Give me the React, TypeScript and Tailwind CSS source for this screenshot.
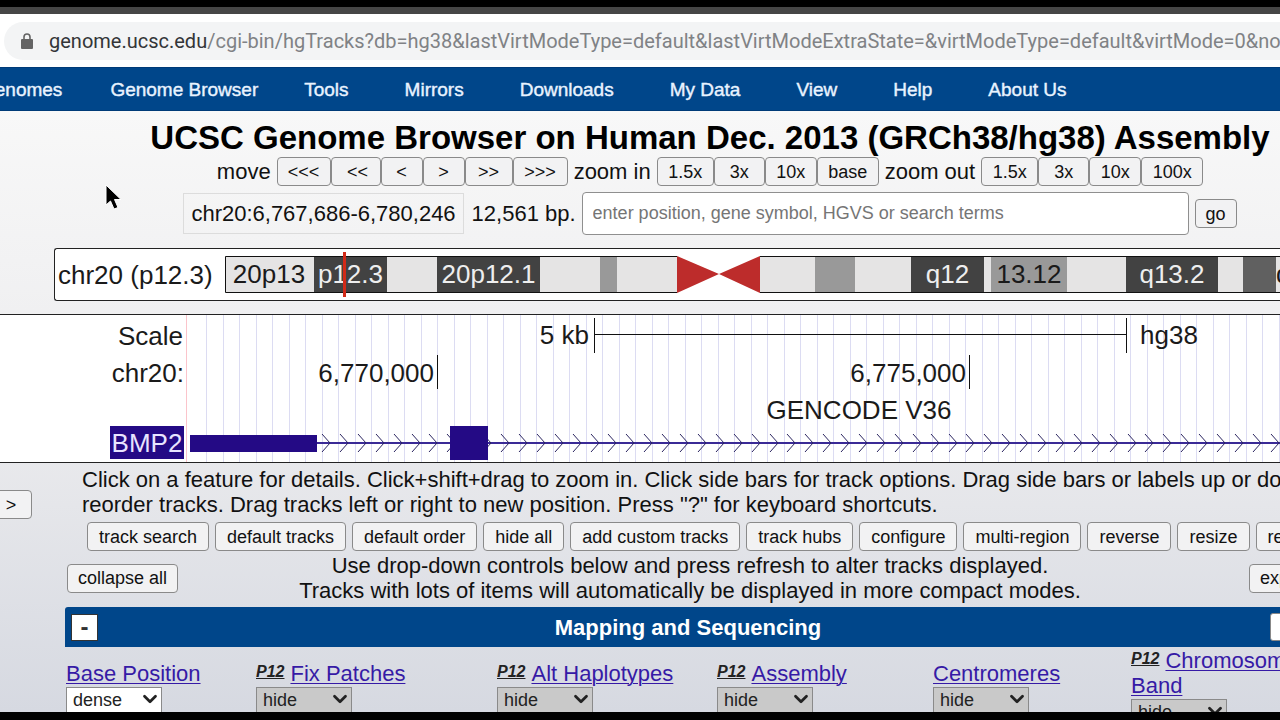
import type { ReactNode } from 'react';
import { ChevronDown } from 'lucide-react';
import clsx from 'clsx';

const menu = ['Tools', 'Mirrors', 'Downloads', 'My Data', 'View', 'Help', 'About Us'];

const moves = [
  { label: '<<<', width: 'w-[54px]' },
  { label: '<<', width: 'w-[50px] pl-1' },
  { label: '<', width: 'w-[42px]' },
  { label: '>', width: 'w-[42px]' },
  { label: '>>', width: 'w-[48px]' },
  { label: '>>>', width: 'w-[55px]' },
];

const zoomsIn = [
  { label: '1.5x', width: 'w-[57px]' },
  { label: '3x', width: 'w-[51px]' },
  { label: '10x', width: 'w-[52px]' },
  { label: 'base', width: 'w-[62px]' },
];

const zoomsOut = [
  { label: '1.5x', width: 'w-[57px]' },
  { label: '3x', width: 'w-[51px]' },
  { label: '10x', width: 'w-[52px]' },
  { label: '100x', width: 'w-[62px]' },
];

const actions = [
  'track search',
  'default tracks',
  'default order',
  'hide all',
  'add custom tracks',
  'track hubs',
  'configure',
  'multi-region',
  'reverse',
  'resize',
  'refresh',
];

const tracks = [
  { name: 'Base Position', patch: false, value: 'dense', width: 'w-[190px]' },
  { name: 'Fix Patches', patch: true, value: 'hide', width: 'w-[241px]' },
  { name: 'Alt Haplotypes', patch: true, value: 'hide', width: 'w-[220px]' },
  { name: 'Assembly', patch: true, value: 'hide', width: 'w-[216px]' },
  { name: 'Centromeres', patch: false, value: 'hide', width: 'w-[198px]' },
  { name: 'Chromosome Band', patch: true, value: 'hide', width: 'w-[180px]' },
];

const bands = [
  { x: 259, w: 73, fill: '#424242', label: 'p12.3', ink: '#eee' },
  { x: 382, w: 103, fill: '#424242', label: '20p12.1', ink: '#eee' },
  { x: 545, w: 17, fill: '#999' },
  { x: 760, w: 40, fill: '#999' },
  { x: 856, w: 73, fill: '#424242', label: 'q12', ink: '#eee' },
  { x: 936, w: 76, fill: '#999', label: '13.12', ink: '#1a1a1a' },
  { x: 1071, w: 92, fill: '#424242', label: 'q13.2', ink: '#eee' },
  { x: 1188, w: 33, fill: '#606060' },
];

const gridLines = Array.from({ length: 160 }, (_, i) => Math.round(206 + i * 16.5));
const arrows = Array.from({ length: 140 }, (_, i) => Math.round(330 + i * 17.9));

type ButtonProps = { children: ReactNode; className?: string };

const Button = ({ children, className }: ButtonProps) => (
  <button
    type="button"
    className={clsx(
      'h-[29px] shrink-0 rounded border border-[#8a8a8a] bg-[#f2f2f3] text-center text-lg leading-none whitespace-nowrap text-[#111]',
      className
    )}
  >
    {children}
  </button>
);

const AddressBar = () => (
  <div className="flex h-[53px] items-center bg-white pt-px">
    <div className="ml-1 flex h-[38px] flex-1 items-center gap-[16px] overflow-hidden rounded-l-full bg-[#f3f4f5] pl-[17px]">
      <svg width="12" height="16" viewBox="0 0 12 16" className="shrink-0">
        <path d="M3 7V4a3 3 0 0 1 6 0v3" fill="none" stroke="#646464" strokeWidth="1.6" />
        <rect x="0" y="6" width="12" height="10" rx="1" fill="#646464" />
      </svg>
      <p className="font-['Roboto',sans-serif] text-xl whitespace-nowrap text-[#808285]">
        <span className="text-[#333538]">genome.ucsc.edu</span>
        /cgi-bin/hgTracks?db=hg38&amp;lastVirtModeType=default&amp;lastVirtModeExtraState=&amp;virtModeType=default&amp;virtMode=0&amp;nonVirtPosition=
      </p>
    </div>
  </div>
);

const Menu = () => (
  <nav className="flex h-11 items-center gap-[56px] border-y border-[#003b78] bg-[#00468a] text-[19px] whitespace-nowrap text-[#e9f3ff] [-webkit-text-stroke:0.4px_#e9f3ff]">
    <a href="#genomes" className="-mr-2 -ml-5">
      Genomes
    </a>
    <a href="#browser" className="-mr-[10px]">
      Genome Browser
    </a>
    {menu.map((item) => (
      <a key={item} href="#menu">
        {item}
      </a>
    ))}
  </nav>
);

const Navigation = () => (
  <div className="flex h-[29px] items-center justify-center whitespace-nowrap">
    <span className="mr-[6px]">move</span>
    {moves.map(({ label, width }) => (
      <Button key={label} className={width}>
        {label}
      </Button>
    ))}
    <span className="mx-[6px]">zoom in</span>
    {zoomsIn.map(({ label, width }) => (
      <Button key={label} className={width}>
        {label}
      </Button>
    ))}
    <span className="mx-[6px]">zoom out</span>
    {zoomsOut.map(({ label, width }) => (
      <Button key={label} className={width}>
        {label}
      </Button>
    ))}
  </div>
);

const Position = () => (
  <div className="mt-[6px] flex h-[43px] items-center justify-center whitespace-nowrap">
    <span className="mr-2 flex h-[41px] items-center border border-[#dcdcdc] px-[7px]">
      chr20:6,767,686-6,780,246
    </span>
    <span className="mr-[6px]">12,561 bp.</span>
    <input
      type="text"
      aria-label="Position or search term"
      placeholder="enter position, gene symbol, HGVS or search terms"
      className="mr-[6px] h-[43px] w-[607px] rounded border border-[#8f8f8f] bg-white px-[10px] text-lg placeholder:text-[#757575]"
    />
    <Button className="w-[42px]">go</Button>
  </div>
);

const Ideogram = () => (
  <div className="mt-[13px] ml-[54px] h-[53px] overflow-hidden rounded-l-[3px] border border-r-0 border-[#222] bg-white">
    <svg className="block h-full w-full text-[26px]" fill="#1a1a1a">
      <text x="3" y="35">
        chr20 (p12.3)
      </text>
      <rect x="170" y="7" width="452" height="36" fill="#e5e4e4" />
      <rect x="705" y="7" width="1800" height="36" fill="#e5e4e4" />
      {bands.map(({ x, w, fill, label, ink }) => (
        <g key={x}>
          <rect x={x} y="7" width={w} height="36" fill={fill} />
          {label && (
            <text x={x + w / 2} y="34" textAnchor="middle" fill={ink}>
              {label}
            </text>
          )}
        </g>
      ))}
      <text x="214" y="34" textAnchor="middle">
        20p13
      </text>
      <text x="1221" y="34">
        q13.33
      </text>
      <path
        d="M622 7.500H170.500V43.500H622M705 7.500H2500M705 43.500H2500"
        fill="none"
        stroke="#111"
      />
      <path d="M622 7L664 25L622 44ZM705 7L664 25L705 44Z" fill="#bd2c2b" />
      <rect x="288" y="3" width="3" height="45" fill="#d22a18" />
    </svg>
  </div>
);

const TrackImage = () => (
  <div className="mt-[13px] h-[149px] border-y border-[#222] bg-white">
    <svg className="block h-full w-full text-[26px]" fill="#1a1a1a">
      {gridLines.map((x) => (
        <rect key={x} x={x} y="0" width="1" height="147" fill="#dcdcf2" />
      ))}
      <rect x="186" y="0" width="1" height="147" fill="#fbc4cb" />
      <text x="183" y="30" textAnchor="end">
        Scale
      </text>
      <text x="184" y="67" textAnchor="end">
        chr20:
      </text>
      <text x="589" y="29" textAnchor="end">
        5 kb
      </text>
      <text x="1140" y="29">
        hg38
      </text>
      <path
        d="M594.500 3V38M1126.500 3V38M594 19.500H1126M437.500 40V74M969.500 40V74"
        stroke="#111"
      />
      <text x="434" y="67" textAnchor="end">
        6,770,000
      </text>
      <text x="966" y="67" textAnchor="end">
        6,775,000
      </text>
      <text x="859" y="104" textAnchor="middle">
        GENCODE V36
      </text>
      <rect x="110" y="111" width="74" height="33" fill="#240a85" />
      <text x="147" y="137" textAnchor="middle" fill="#e8e4ff">
        BMP2
      </text>
      <rect x="317" y="127" width="2200" height="2" fill="#3a2a96" />
      {arrows.map((x) => (
        <path key={x} d={`M${x - 8} 119L${x} 128L${x - 8} 137`} fill="none" stroke="#2b2560" />
      ))}
      <rect x="190" y="120" width="127" height="17" fill="#240a85" />
      <rect x="450" y="111" width="38" height="34" fill="#240a85" />
    </svg>
  </div>
);

const TrackControl = ({ name, patch, value, width }: (typeof tracks)[number]) => (
  <div className={clsx('shrink-0', width)}>
    <div className="leading-[25px]">
      {patch && (
        <a
          href="#patch"
          className="mr-[6px] align-[4px] text-base leading-none font-bold text-[#222] italic underline"
        >
          P12
        </a>
      )}
      <a href="#track" className="text-[#361aa6] underline decoration-1 underline-offset-2">
        {name}
      </a>
    </div>
    <div className="relative h-[26px] w-[96px]">
      <select
        aria-label={name}
        defaultValue={value}
        className={clsx(
          'h-full w-full appearance-none border border-[#8a8a8a] pl-[6px] text-lg leading-none text-[#222]',
          value === 'hide' ? 'bg-[#c9c9c9]' : 'bg-white'
        )}
      >
        <option>hide</option>
        <option>dense</option>
        <option>full</option>
      </select>
      <ChevronDown
        size={22}
        strokeWidth={3}
        className="pointer-events-none absolute top-[2px] right-px text-[#222]"
      />
    </div>
  </div>
);

const App = () => (
  <div className="relative flex h-screen flex-col overflow-hidden border-t-[7px] border-b-8 border-black bg-[#464646] pt-[7px] font-['Liberation_Sans',Arial,sans-serif] text-[22px] leading-[25px] text-[#111]">
    <AddressBar />
    <Menu />
    <main className="min-h-0 flex-1 overflow-hidden bg-linear-to-b from-[#f8f8f8] via-[#ececee] to-[#d6d9e1]">
      <div className="pl-[140px]">
        <h1 className="flex h-[46px] items-center justify-center pt-[6px] text-[33px] font-bold whitespace-nowrap text-black">
          UCSC Genome Browser on Human Dec. 2013 (GRCh38/hg38) Assembly
        </h1>
        <Navigation />
        <Position />
      </div>
      <Ideogram />
      <TrackImage />

      <div className="flex items-start pt-1">
        <div className="w-[82px] shrink-0 pt-[23px]">
          <Button className="-ml-[10px] block w-[42px]">&gt;</Button>
        </div>
        <p className="whitespace-nowrap">
          Click on a feature for details. Click+shift+drag to zoom in. Click side bars for track
          options. Drag side bars or labels up or down to
          <br />
          reorder tracks. Drag tracks left or right to new position. Press "?" for keyboard
          shortcuts.
        </p>
      </div>
      <div className="mt-[3px] flex gap-[6px] pl-[87px]">
        {actions.map((label) => (
          <Button key={label} className="px-[11px]">
            {label}
          </Button>
        ))}
      </div>

      <div className="-mr-[31px] ml-[65px]">
        <div className="-mr-[2px] grid grid-cols-[1fr_auto_1fr] items-center pt-[2px] pl-[2px]">
          <Button className="justify-self-start px-[10px]">collapse all</Button>
          <p className="text-center whitespace-nowrap">
            Use drop-down controls below and press refresh to alter tracks displayed.
            <br />
            Tracks with lots of items will automatically be displayed in more compact modes.
          </p>
          <Button className="-mr-10 justify-self-end px-[10px]">expand all</Button>
        </div>
        <div className="mt-1 grid h-10 grid-cols-[1fr_auto_1fr] items-center rounded-tl-[3px] bg-[#00468a] pl-[6px] pr-[6px] text-white">
          <button
            type="button"
            aria-label="Collapse Mapping and Sequencing"
            className="h-[27px] w-[27px] justify-self-start border border-[#333] bg-white text-2xl leading-none font-bold text-[#333]"
          >
            <span className="block pb-1">-</span>
          </button>
          <h2 className="font-bold">Mapping and Sequencing</h2>
          <button
            type="button"
            className="h-7 w-[35px] justify-self-end rounded-[3px] border border-[#888] bg-white"
            aria-label="Refresh"
          />
        </div>
        <div className="mt-px flex items-center pl-px">
          {tracks.map((track) => (
            <TrackControl key={track.name} {...track} />
          ))}
        </div>
      </div>
    </main>

    <svg
      width="18"
      height="28"
      viewBox="0 0 18 28"
      className="pointer-events-none absolute top-[177px] left-[105px]"
    >
      <path
        d="M1 1V21L5.500 17L9 25L13 23.500L9.500 15.500H16Z"
        fill="#000"
        stroke="#fff"
        strokeWidth="1"
      />
    </svg>
  </div>
);

export default App;
